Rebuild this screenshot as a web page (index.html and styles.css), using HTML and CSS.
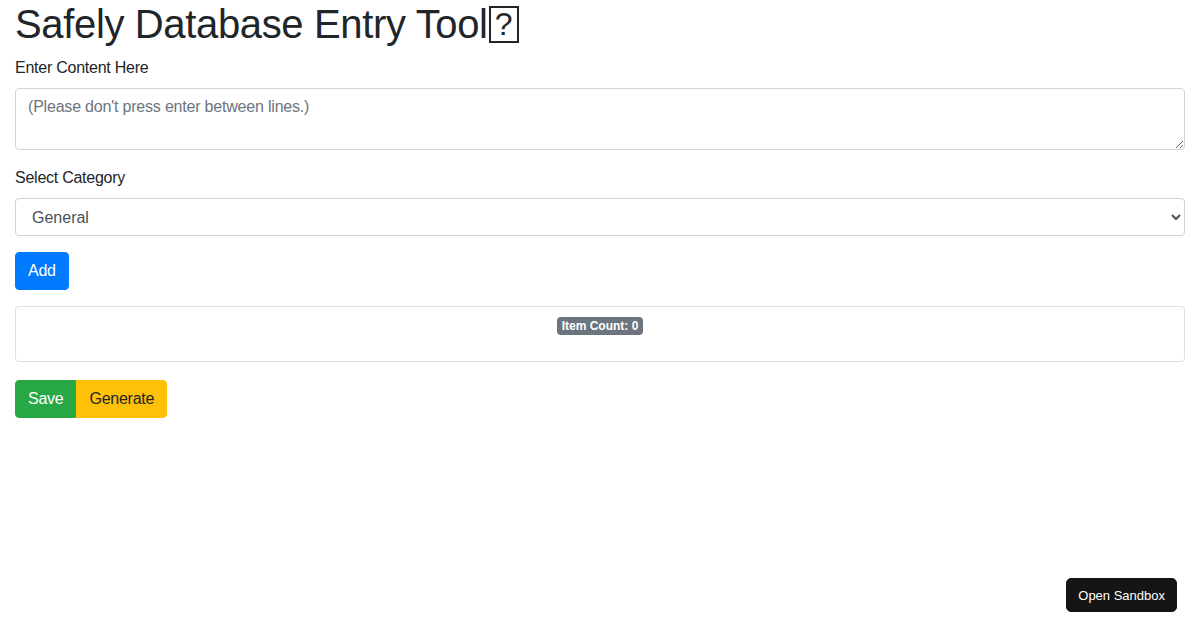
FILE: index.html
```html
<!DOCTYPE html>
<html lang="en">
<head>
<meta charset="utf-8">
<title>Safely Database Entry Tool</title>
<link rel="stylesheet" href="styles.css">
</head>
<body>
<div class="container">
  <h1 class="title">Safely Database Entry Tool<span class="tofu">?</span></h1>
  <div class="form-group">
    <label class="label" for="content">Enter Content Here</label>
    <textarea id="content" class="form-control textarea" rows="2" placeholder="(Please don't press enter between lines.)"></textarea>
  </div>
  <div class="form-group">
    <label class="label" for="category">Select Category</label>
    <select id="category" class="form-control select">
      <option>General</option>
    </select>
  </div>
  <button class="btn btn-primary add-btn">Add</button>
  <div class="card">
    <span class="badge">Item Count: 0</span>
  </div>
  <div class="btn-group">
    <button class="btn btn-success">Save</button>
    <button class="btn btn-warning">Generate</button>
  </div>
</div>
<button class="sandbox-btn">Open Sandbox</button>
</body>
</html>
```
FILE: styles.css
```css
* { box-sizing: border-box; }
html, body { margin: 0; padding: 0; }
body {
  font-family: "Liberation Sans", Arial, sans-serif;
  font-size: 16px;
  line-height: 1.5;
  color: #212529;
  background: #fff;
}
.container { padding: 0 15px; }
.title {
  margin: 0 0 8px;
  font-size: 40px;
  font-weight: 400;
  line-height: 1.2;
  height: 48px;
  letter-spacing: -0.35px;
}
.tofu {
  display: inline-block;
  width: 30px;
  height: 37px;
  border: 2px solid #212529;
  font-size: 32px;
  line-height: 33px;
  text-align: center;
  vertical-align: top;
  margin-top: 6px;
  margin-left: 1px;
  letter-spacing: 0;
}
.form-group { margin-bottom: 16px; }
.label { display: inline-block; margin-bottom: 8px; letter-spacing: -0.25px; }
.form-control {
  display: block;
  width: 100%;
  font-family: inherit;
  font-size: 16px;
  line-height: 1.5;
  color: #495057;
  background: #fff;
  border: 1px solid #ced4da;
  border-radius: 4px;
  padding: 6px 12px;
}
.textarea { height: 62px; resize: vertical; letter-spacing: -0.2px; }
.textarea::placeholder { color: #6c757d; opacity: 1; }
.select { height: 38px; }
.btn {
  display: inline-block;
  font-family: inherit;
  font-size: 16px;
  line-height: 1.5;
  padding: 6px 12px;
  border: 1px solid transparent;
  border-radius: 4px;
  cursor: pointer;
  letter-spacing: -0.25px;
}
.btn-primary { background: #007bff; border-color: #007bff; color: #fff; }
.btn-success { background: #28a745; border-color: #28a745; color: #fff; }
.btn-warning { background: #ffc107; border-color: #ffc107; color: #212529; }
.add-btn { margin-bottom: 16px; }
.card {
  border: 1px solid rgba(0,0,0,.125);
  border-radius: 4px;
  height: 56px;
  padding: 10px;
  text-align: center;
  line-height: 18px;
  margin-bottom: 18px;
}
.badge {
  display: inline-block;
  vertical-align: top;
  background: #6c757d;
  color: #fff;
  font-size: 12px;
  font-weight: 700;
  line-height: 1;
  padding: 3px 5px;
  border-radius: 4px;
}
.btn-group { display: inline-flex; }
.btn-group .btn:first-child { border-top-right-radius: 0; border-bottom-right-radius: 0; }
.btn-group .btn:last-child { border-top-left-radius: 0; border-bottom-left-radius: 0; }
.sandbox-btn {
  position: fixed;
  right: 23px;
  bottom: 18px;
  height: 34px;
  padding: 0 11px;
  background: #151515;
  color: #fff;
  border: 1px solid #151515;
  border-radius: 5px;
  font-family: "Liberation Sans", Arial, sans-serif;
  font-size: 13px;
}
```
